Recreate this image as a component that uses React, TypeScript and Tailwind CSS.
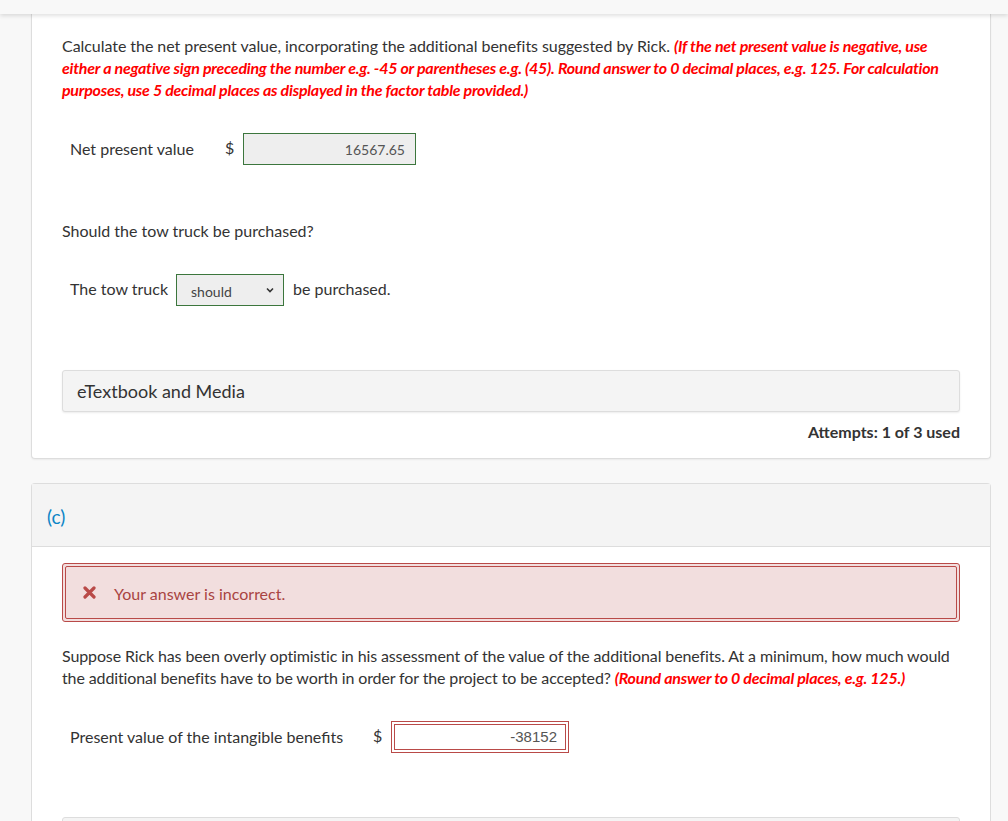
export default function App() {
  return (
    <div className="min-h-screen bg-[#f8f8f8] font-['Lato','Noto_Sans',sans-serif] text-[#333]">
      <div className="relative z-10 h-[14px] bg-[#f8f8f8] shadow-[0_2px_4px_rgba(0,0,0,0.12)]" />
      <div className="ml-[31px] w-[960px]">
        {/* part (b) card */}
        <div className="rounded-b-[4px] border-x border-b border-[#ddd] bg-white px-[30px] pt-[21px] pb-[15px] shadow-[0_1px_2px_rgba(0,0,0,0.06)]">
          <p className="text-[16px] leading-[22px] tracking-[-0.05px]">
            Calculate the net present value, incorporating the additional benefits suggested by Rick.{" "}
            <span className="font-bold italic tracking-[-0.25px] text-[#f00]">
              (If the net present value is negative, use either a negative sign preceding the number e.g. -45 or parentheses e.g. (45). Round answer to 0 decimal places, e.g. 125. For calculation purposes, use 5 decimal places as displayed in the factor table provided.)
            </span>
          </p>

          <div className="mt-[32px] flex items-center pl-[8px]">
            <span className="w-[155px] text-[16px]">Net present value</span>
            <span className="-mt-[3px] w-[18px] text-[16px]">$</span>
            <div className="flex h-[32px] w-[173px] items-center justify-end border border-[#3c763d] bg-[#eee] pr-[10px] text-[14px] text-[#555]">
              16567.65
            </div>
          </div>

          <p className="mt-[55px] text-[16px] leading-[22px]">Should the tow truck be purchased?</p>

          <div className="mt-[32px] flex items-center pl-[8px]">
            <span className="mr-[8px] -mt-[2px] text-[16px]">The tow truck</span>
            <div className="flex h-[32px] w-[108px] items-center justify-between border border-[#3c763d] bg-[#eee] pl-[14px] pr-[8px] text-[14px] text-[#444]">
              <span className="mt-[2px]">should</span>
              <svg width="10" height="10" viewBox="0 0 10 10">
                <path d="M2 3.5 L5 6.5 L8 3.5" fill="none" stroke="#333" strokeWidth="1.6" />
              </svg>
            </div>
            <span className="ml-[9px] -mt-[2px] text-[16px]">be purchased.</span>
          </div>

          <div className="mt-[64px] flex h-[42px] items-center rounded-[3px] border border-[#ddd] bg-[#f4f4f4] px-[14px] text-[18px] shadow-[0_1px_2px_rgba(0,0,0,0.08)]">
            eTextbook and Media
          </div>

          <p className="mt-[9px] text-right text-[16px] font-bold leading-[22px]">Attempts: 1 of 3 used</p>
        </div>

        {/* part (c) card */}
        <div className="mt-[24px] rounded-t-[4px] border-x border-t border-[#ddd] bg-white">
          <div className="flex h-[63px] items-center border-b border-[#ddd] bg-[#f4f4f4] px-[15px] pt-[4px] text-[19px] text-[#0a84c6]">
            (c)
          </div>
          <div className="px-[30px] pt-[16px] pb-[10px]">
            <div className="rounded-[3px] border border-[#b94a48] bg-[#f2dede] p-[2px]">
              <div className="flex h-[53px] items-center rounded-[2px] border border-[#b94a48] pl-[17px] pt-[2px] text-[16px] text-[#a94442]">
                <svg width="13" height="13" viewBox="0 0 13 13" className="mr-[18px] -mt-[2px]">
                  <path d="M2 2 L11 11 M11 2 L2 11" stroke="#b94a48" strokeWidth="3.2" strokeLinecap="round" />
                </svg>
                Your answer is incorrect.
              </div>
            </div>

            <p className="mt-[23px] text-[16px] leading-[22px] tracking-[-0.12px]">
              Suppose Rick has been overly optimistic in his assessment of the value of the additional benefits. At a minimum, how much would the additional benefits have to be worth in order for the project to be accepted?{" "}
              <span className="font-bold italic tracking-[-0.25px] text-[#f00]">(Round answer to 0 decimal places, e.g. 125.)</span>
            </p>

            <div className="mt-[32px] flex items-center pl-[8px]">
              <span className="w-[303px] text-[16px]">Present value of the intangible benefits</span>
              <span className="-mt-[3px] w-[18px] text-[16px]">$</span>
              <div className="border border-[#b94a48] bg-white p-[2px]">
                <div className="flex h-[26px] w-[172px] items-center justify-end border border-[#b94a48] pr-[8px] font-['Liberation_Sans',Arial,sans-serif] text-[15px] text-[#555]">
                  -38152
                </div>
              </div>
            </div>

            <div className="mt-[64px] h-[42px] rounded-[3px] border border-[#ddd] bg-[#f4f4f4]" />
          </div>
        </div>
      </div>
    </div>
  )
}
